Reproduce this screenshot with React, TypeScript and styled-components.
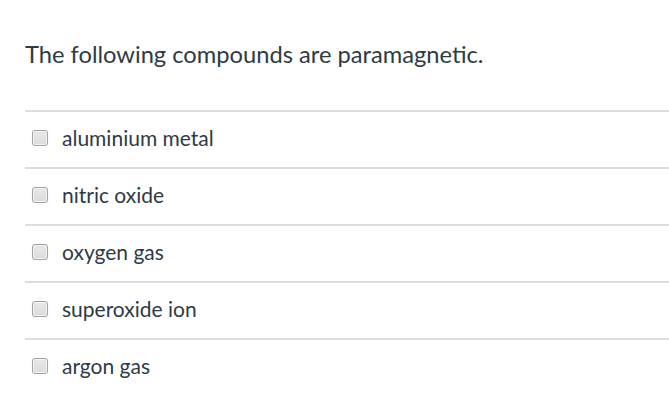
import React from "react";
import styled, { createGlobalStyle } from "styled-components";

const Global = createGlobalStyle`
  html, body { margin: 0; padding: 0; background: #fff; }
  body { font-family: Lato, "Noto Sans", sans-serif; color: #2d3b45; }
`;

const Page = styled.div`
  padding: 0 0 0 25px;
`;

const Title = styled.h2`
  margin: 0;
  padding: 40px 0 0 0;
  height: 110px;
  box-sizing: border-box;
  font-size: 23.7px;
  font-weight: 400;
  line-height: 28px;
  color: #2d3b45;
`;

const List = styled.ul`
  list-style: none;
  margin: 0;
  padding: 0;
`;

const Row = styled.li`
  display: flex;
  align-items: center;
  gap: 14px;
  height: 57px;
  box-sizing: border-box;
  border-top: 2px solid #dcdcdc;
  padding: 0 0 4px 7px;
`;

const Box = styled.span`
  display: inline-block;
  width: 14px;
  height: 14px;
  border: 1px solid #a4a4a4;
  border-radius: 3px;
  background: linear-gradient(#e8e8e8, #dcdcdc);
  box-shadow: inset 0 0 0 1px #f2f2f2, 0 0 1px rgba(0, 0, 0, 0.15);
  flex: none;
`;

const Label = styled.span`
  font-size: 21px;
  line-height: 24px;
  color: #2d3b45;
`;

const options = ["aluminium metal", "nitric oxide", "oxygen gas", "superoxide ion", "argon gas"];

export default function App() {
  return (
    <Page>
      <Global />
      <Title>The following compounds are paramagnetic.</Title>
      <List>
        {options.map((o) => (
          <Row key={o}>
            <Box />
            <Label>{o}</Label>
          </Row>
        ))}
      </List>
    </Page>
  );
}
